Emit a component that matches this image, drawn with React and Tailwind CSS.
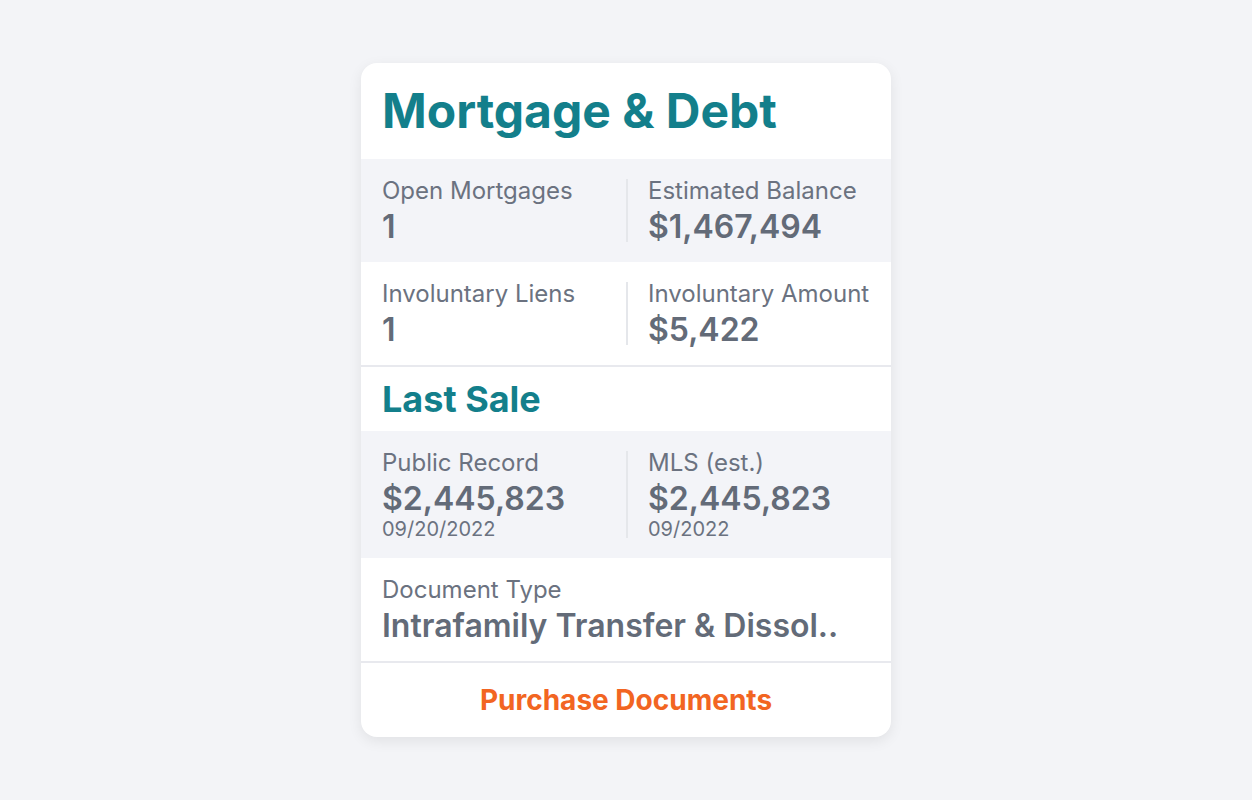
import React from "react";

const Stat = ({ label, value, sub, divider }) => (
  <div className={divider ? "border-l-2 border-[#e5e7eb] pl-[20px]" : "pr-4"}>
    <div className="text-[24px] leading-[24px] text-[#6b7280]">{label}</div>
    <div className={`mt-[8px] text-[32px] leading-[32px] font-semibold text-[#636b78] ${sub ? "" : "mb-[-1px]"}`}>
      {value}
    </div>
    {sub && <div className="mt-[2px] -mb-[3px] text-[20px] leading-[24px] text-[#6b7280]">{sub}</div>}
  </div>
);

const App = () => {
  return (
    <div
      className="min-h-screen bg-[#f3f4f7] flex justify-center pt-[63px]"
      style={{ fontFamily: "Inter, 'Noto Sans', sans-serif" }}
    >
      <div className="w-[530px] h-[674px] bg-white rounded-[16px] shadow-[0_4px_14px_rgba(0,0,0,0.08)] overflow-hidden flex flex-col">
        <div className="h-[96px] shrink-0 px-[21px] flex items-center">
          <h1 className="text-[48px] font-bold text-[#137f8b]">Mortgage &amp; Debt</h1>
        </div>

        <div className="bg-[#f3f4f8] px-[21px] py-[20px] grid grid-cols-2">
          <Stat label="Open Mortgages" value="1" />
          <Stat label="Estimated Balance" value="$1,467,494" divider />
        </div>

        <div className="px-[21px] py-[20px] grid grid-cols-2 border-b-2 border-[#e8e9ee]">
          <Stat label="Involuntary Liens" value="1" />
          <Stat label="Involuntary Amount" value="$5,422" divider />
        </div>

        <div className="h-[64px] shrink-0 px-[21px] flex items-center">
          <h2 className="text-[36px] font-bold text-[#137f8b]">Last Sale</h2>
        </div>

        <div className="bg-[#f3f4f8] px-[21px] py-[20px] grid grid-cols-2">
          <Stat label="Public Record" value="$2,445,823" sub="09/20/2022" />
          <Stat label="MLS (est.)" value="$2,445,823" sub="09/2022" divider />
        </div>

        <div className="px-[21px] py-[20px] border-b-2 border-[#e8e9ee]">
          <div className="text-[24px] leading-[24px] text-[#6b7280]">Document Type</div>
          <div className="mt-[6px] -mb-[3px] text-[32px] leading-[36px] font-semibold text-[#636b78] whitespace-nowrap">
            Intrafamily Transfer &amp; Dissol..
          </div>
        </div>

        <div className="flex-1 flex items-center justify-center">
          <button className="text-[28px] font-bold text-[#f26522]">Purchase Documents</button>
        </div>
      </div>
    </div>
  );
};

export default App;
